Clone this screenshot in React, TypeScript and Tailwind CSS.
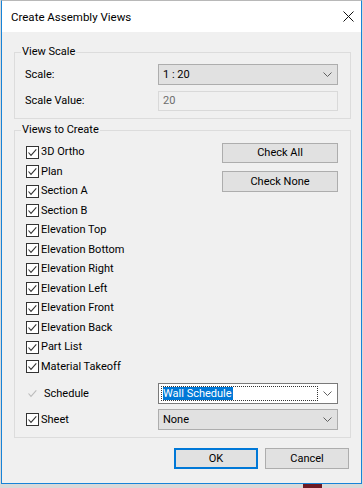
import React from "react";

const CheckMark = ({ color }: { color: string }) => (
  <svg width="11" height="11" viewBox="0 0 11 11" className="block">
    <path d="M1.5 5.5 L4 8.3 L9.3 2.3" fill="none" stroke={color} strokeWidth="1.1" />
  </svg>
);

const Box = ({ disabled }: { disabled?: boolean }) =>
  disabled ? (
    <span className="w-[13px] h-[13px] border border-transparent flex items-center justify-center shrink-0">
      <CheckMark color="#bcbcbc" />
    </span>
  ) : (
    <span className="w-[13px] h-[13px] border border-[#333333] bg-white flex items-center justify-center shrink-0">
      <CheckMark color="#333333" />
    </span>
  );

const Chevron = () => (
  <svg width="9" height="5" viewBox="0 0 9 5" className="block">
    <path d="M0.5 0.5 L4.5 4.5 L8.5 0.5" fill="none" stroke="#606060" strokeWidth="1" />
  </svg>
);

const Combo = ({ text }: { text: string }) => (
  <div className="w-[180px] h-[21px] border border-[#adadad] bg-[#e1e1e1] flex items-center pl-[4px] pr-[5px]">
    <span>{text}</span>
    <span className="ml-auto">
      <Chevron />
    </span>
  </div>
);

const items = [
  "3D Ortho",
  "Plan",
  "Section A",
  "Section B",
  "Elevation Top",
  "Elevation Bottom",
  "Elevation Right",
  "Elevation Left",
  "Elevation Front",
  "Elevation Back",
  "Part List",
  "Material Takeoff",
];

export default function App() {
  return (
    <div className="w-[363px] h-[488px] bg-[#d9d9d9] flex flex-col text-[11px] leading-[16px] text-black font-[family-name:Roboto,sans-serif] overflow-hidden">
      <div className="ml-[1px] w-[361px] h-[484px] border-x border-b border-t border-x-[#1883d7] border-b-[#1883d7] border-t-[#b8b8b8] flex flex-col shrink-0">
        {/* Title bar */}
        <div className="h-[31px] bg-white flex items-center pl-[9px] pr-[7px] shrink-0">
          <span className="text-[11.5px]">Create Assembly Views</span>
          <span className="ml-auto">
            <svg width="11" height="11" viewBox="0 0 11 11" className="block">
              <path d="M0.5 0.5 L10.5 10.5 M10.5 0.5 L0.5 10.5" stroke="#111" strokeWidth="1" />
            </svg>
          </span>
        </div>
        {/* Client */}
        <div className="flex-1 bg-[#f0f0f0] flex flex-col pl-[12px] pr-[10px]">
          {/* View Scale group */}
          <div className="relative mt-[20px] border border-[#dcdcdc] pl-[10px] pt-[11px] pb-[7px] flex flex-col gap-[6px]">
            <span className="absolute -top-[9px] left-[6px] bg-[#f0f0f0] px-[1px]">View Scale</span>
            <div className="grid grid-cols-[133px_180px] items-center">
              <span>Scale:</span>
              <Combo text="1 : 20" />
            </div>
            <div className="grid grid-cols-[133px_180px] items-center">
              <span>Scale Value:</span>
              <div className="w-[180px] h-[20px] border border-[#d9d9d9] bg-[#f0f0f0] flex items-center pl-[4px] text-[#6d6d6d]">
                20
              </div>
            </div>
          </div>

          {/* Views to Create group */}
          <div className="relative mt-[11px] border border-[#dcdcdc] pl-[11px] pr-[12px] pb-[7px] flex flex-col">
            <span className="absolute -top-[9px] left-[6px] bg-[#f0f0f0] px-[1px]">Views to Create</span>
            <div className="flex">
              <div className="flex flex-col pt-[11.5px]">
                {items.map((t) => (
                  <div key={t} className="h-[19.5px] flex items-center gap-[2px]">
                    <Box />
                    <span>{t}</span>
                  </div>
                ))}
              </div>
              <div className="ml-auto flex flex-col pt-[12px] gap-[8px]">
                <button className="w-[116px] h-[20px] border border-[#adadad] bg-[#e1e1e1] flex items-center justify-center">
                  Check All
                </button>
                <button className="w-[116px] h-[21px] border border-[#adadad] bg-[#e1e1e1] flex items-center justify-center">
                  Check None
                </button>
              </div>
            </div>
            <div className="mt-[6.5px] flex items-center h-[21px]">
              <div className="w-[132px] flex items-center gap-[5px]">
                <Box disabled />
                <span>Schedule</span>
              </div>
              <div className="w-[180px] h-[21px] border border-[#7a7a7a] bg-white flex items-center pl-[2px] pr-[5px]">
                <div className="w-[157px] h-[15px] border border-dotted border-[#333333] flex items-center pl-[1px]">
                  <span className="bg-[#0078d7] text-white leading-[13px] pr-[1px]">Wall Schedule</span>
                </div>
                <span className="ml-auto">
                  <Chevron />
                </span>
              </div>
            </div>
            <div className="mt-[5px] flex items-center h-[21px]">
              <div className="w-[132px] flex items-center gap-[2px]">
                <Box />
                <span>Sheet</span>
              </div>
              <Combo text="None" />
            </div>
          </div>

          {/* Bottom buttons */}
          <div className="mt-[10px] flex justify-end gap-[7px] pr-[2px]">
            <button className="w-[84px] h-[21px] border-2 border-[#0078d7] bg-[#e1e1e1] flex items-center justify-center">
              OK
            </button>
            <button className="w-[84px] h-[21px] border border-[#adadad] bg-[#e1e1e1] flex items-center justify-center">
              Cancel
            </button>
          </div>
        </div>
      </div>
      <div className="h-[4px] flex shrink-0">
        <div className="ml-[303px] w-[19px] h-[4px] bg-[#6b1a24]" />
      </div>
    </div>
  );
}
